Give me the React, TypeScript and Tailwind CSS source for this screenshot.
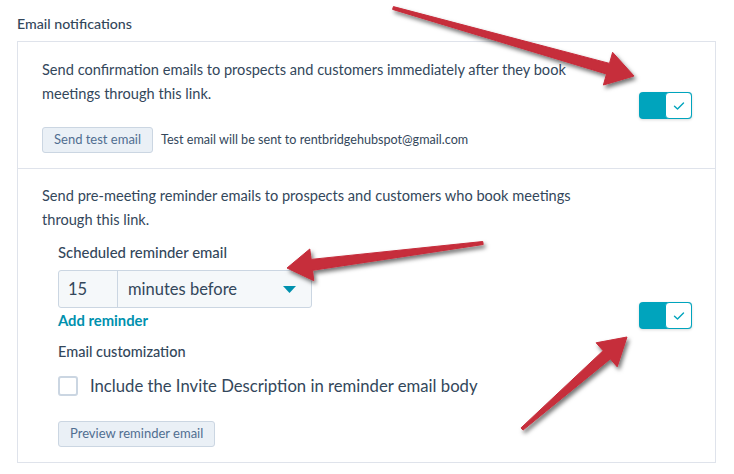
import React from "react";

function Toggle() {
  return (
    <div className="flex h-[27px] w-[53px] shrink-0 rounded-[4px] bg-[#00a4bd] shadow-[0_1px_3px_rgba(0,0,0,0.15)]">
      <div className="ml-auto flex h-[27px] w-[27px] items-center justify-center rounded-[4px] border border-[#00a4bd] bg-white">
        <svg width="12" height="10" viewBox="0 0 12 10" fill="none">
          <path d="M1.5 5.2 L4.5 8 L10.5 2" stroke="#00a4bd" strokeWidth="1.4" strokeLinecap="round" strokeLinejoin="round" />
        </svg>
      </div>
    </div>
  );
}

type Arrow = { tail: [number, number]; tip: [number, number]; headLen: number; headHalf: number; shaftStart: number; shaftEnd: number };

function arrowPoints(a: Arrow) {
  const [tx, ty] = a.tail;
  const [px, py] = a.tip;
  const dx = px - tx;
  const dy = py - ty;
  const len = Math.hypot(dx, dy);
  const ux = dx / len;
  const uy = dy / len;
  const nx = -uy;
  const ny = ux;
  const bx = px - ux * a.headLen;
  const by = py - uy * a.headLen;
  const pts = [
    [tx + nx * a.shaftStart, ty + ny * a.shaftStart],
    [bx + nx * a.shaftEnd, by + ny * a.shaftEnd],
    [bx + nx * a.headHalf, by + ny * a.headHalf],
    [px, py],
    [bx - nx * a.headHalf, by - ny * a.headHalf],
    [bx - nx * a.shaftEnd, by - ny * a.shaftEnd],
    [tx - nx * a.shaftStart, ty - ny * a.shaftStart],
  ];
  return pts.map((p) => `${p[0].toFixed(1)},${p[1].toFixed(1)}`).join(" ");
}

const arrows: Arrow[] = [
  { tail: [393, 8], tip: [634, 76], headLen: 27, headHalf: 17, shaftStart: 1.5, shaftEnd: 5.5 },
  { tail: [483, 243], tip: [287, 268], headLen: 25, headHalf: 16, shaftStart: 1.5, shaftEnd: 5.5 },
  { tail: [522, 429], tip: [627, 337], headLen: 27, headHalf: 16, shaftStart: 1.5, shaftEnd: 5.5 },
];

export default function App() {
  return (
    <div className="relative h-[474px] w-[734px] overflow-hidden bg-white pl-[17px] pt-[14px] font-['Lato',sans-serif] text-[#33475b]">
      <h3 className="h-[20px] text-[14.2px] leading-[20px] font-medium">Email notifications</h3>

      <div className="mt-[7px] w-[699px] border border-[#dfe3eb]">
        <section className="flex items-center border-b border-[#dfe3eb] pl-[24px] pr-[23px] pt-[16px] pb-[15px]">
          <div className="flex-1">
            <p className="w-[540px] text-[14.6px] leading-[24px]">
              Send confirmation emails to prospects and customers immediately after they book meetings through this link.
            </p>
            <div className="mt-[21px] flex items-center gap-[8px]">
              <button className="h-[26px] rounded-[3px] border border-[#cbd6e2] bg-[#eaf0f6] px-[11px] text-[13px] text-[#506e91]">
                Send test email
              </button>
              <span className="text-[12.6px]">Test email will be sent to rentbridgehubspot@gmail.com</span>
            </div>
          </div>
          <Toggle />
        </section>

        <section className="flex items-center pl-[24px] pr-[23px] pt-[15px] pb-[15px]">
          <div className="flex-1">
            <p className="w-[560px] text-[14.6px] leading-[24px]">
              Send pre-meeting reminder emails to prospects and customers who book meetings through this link.
            </p>
            <div className="ml-[16px]">
              <div className="mt-[10px] text-[14.9px] leading-[20px] font-medium">Scheduled reminder email</div>
              <div className="mt-[8px] flex h-[38px] w-[254px] rounded-[3px] border border-[#cbd6e2] bg-[#f5f8fa] text-[16.5px]">
                <div className="flex w-[59px] items-center border-r border-[#cbd6e2] pl-[9px]">15</div>
                <div className="flex flex-1 items-center justify-between pl-[10px] pr-[15px]">
                  <span>minutes before</span>
                  <svg width="13" height="7" viewBox="0 0 13 7">
                    <path d="M0 0 H13 L6.5 7 Z" fill="#0091ae" />
                  </svg>
                </div>
              </div>
              <div className="mt-[2px] text-[14.8px] leading-[20px] font-bold text-[#0091ae]">Add reminder</div>
              <div className="mt-[12px] text-[14.5px] leading-[20px] font-medium">Email customization</div>
              <label className="mt-[14px] flex items-center gap-[12px]">
                <span className="h-[20px] w-[20px] rounded-[3px] border-2 border-[#cbd6e2] bg-white" />
                <span className="text-[16.7px] leading-[20px]">Include the Invite Description in reminder email body</span>
              </label>
              <button className="mt-[25px] h-[26px] rounded-[3px] border border-[#cbd6e2] bg-[#eaf0f6] px-[11px] text-[13px] text-[#506e91]">
                Preview reminder email
              </button>
            </div>
          </div>
          <Toggle />
        </section>
      </div>

      <svg className="pointer-events-none absolute inset-0" width="734" height="474">
        <defs>
          <filter id="sh" x="-20%" y="-20%" width="140%" height="140%">
            <feDropShadow dx="2" dy="3" stdDeviation="2" floodColor="#000" floodOpacity="0.55" />
          </filter>
        </defs>
        {arrows.map((a, i) => (
          <polygon key={i} points={arrowPoints(a)} fill="#c62d3b" strokeLinejoin="round" stroke="#c62d3b" strokeWidth="1" filter="url(#sh)" />
        ))}
      </svg>
    </div>
  );
}
